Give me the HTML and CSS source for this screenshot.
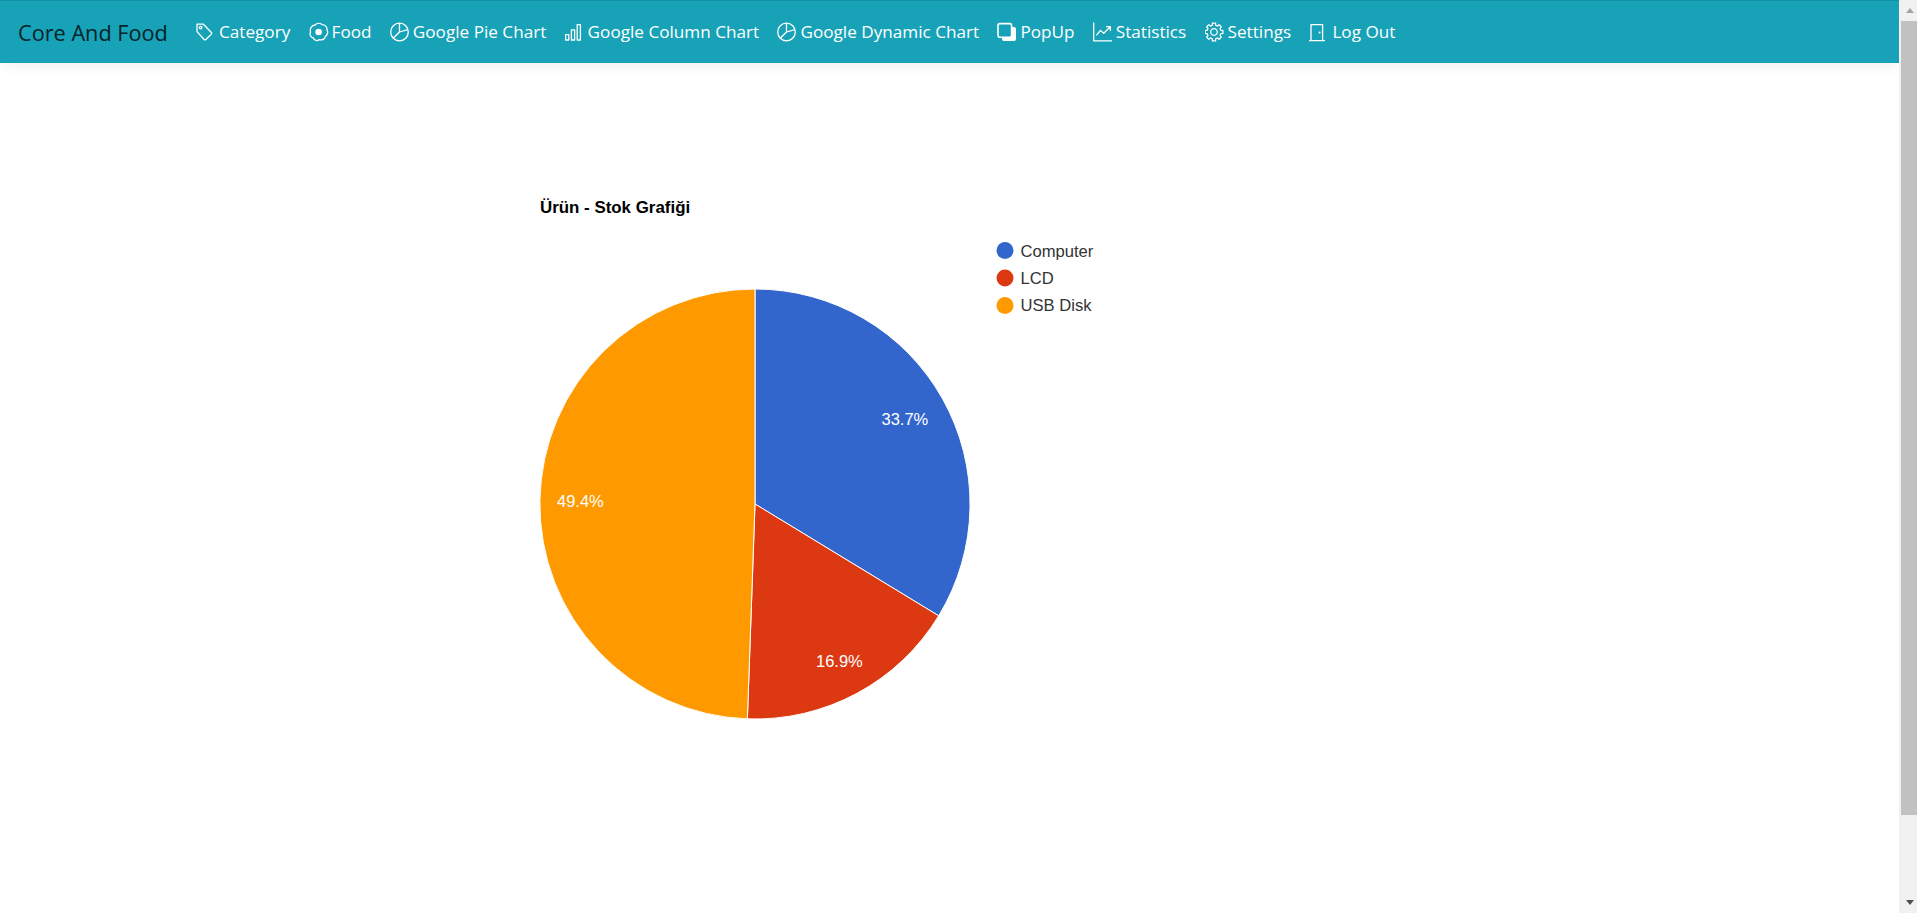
FILE: index.html
```html
<!DOCTYPE html>
<html lang="tr">
<head>
<meta charset="utf-8">
<title>Core And Food</title>
<link rel="stylesheet" href="styles.css">
</head>
<body>
<div class="page">
  <nav class="navbar">
    <a class="brand" href="#">Core And Food</a>
    <ul class="menu">
      <li class="item"><svg class="icon" viewBox="0 0 20 20"><path d="M1 2.2H7.4L15.6 10.8Q16 11.4 15.6 11.9L9.6 17.7Q9 18.2 8.4 17.7L1 9.6Z"/><circle cx="4.6" cy="5.6" r="1.3"/></svg><span class="text">Category</span></li>
      <li class="item"><svg class="icon" viewBox="0 0 20 20"><path d="M6 3C8 .8 11 1 13 2.6C16 2.4 18.4 5 18 8C19.6 10.5 18 13.5 16.4 14.4C16 17 13 18.6 10.6 17.6C8.6 19.4 5 18.4 4.4 16C1.8 15.6 .2 12.4 1.6 10C.4 7 2.8 3.2 6 3Z"/><circle class="solid" cx="9.6" cy="10" r="3.3"/></svg><span class="text">Food</span></li>
      <li class="item"><svg class="icon" viewBox="0 0 20 20"><circle cx="9.5" cy="10" r="8.8"/><path d="M9.5 1.2V10L17.8 7.6M9.5 10L3.2 16.2"/></svg><span class="text">Google Pie Chart</span></li>
      <li class="item"><svg class="icon" viewBox="0 0 20 20"><path d="M.6 12.6H3.8V18H.6ZM6.4 7.8H9.6V18H6.4ZM12.2 2.6H15.4V18H12.2Z"/></svg><span class="text">Google Column Chart</span></li>
      <li class="item"><svg class="icon" viewBox="0 0 20 20"><circle cx="9.5" cy="10" r="8.8"/><path d="M9.5 1.2V10L17.8 7.6M9.5 10L3.2 16.2"/></svg><span class="text">Google Dynamic Chart</span></li>
      <li class="item"><svg class="icon" viewBox="0 0 20 20"><rect class="solid" x="5" y="5" width="14" height="14" rx="2"/><rect class="backed" x="1" y="1.6" width="13.6" height="13.6" rx="2"/></svg><span class="text">PopUp</span></li>
      <li class="item"><svg class="icon" viewBox="0 0 20 20"><path d="M.7 .5V18.8H19M3.4 13.4L7.4 8.4L10.8 11.2L17.2 4.8M13 4.6H17.4V9"/></svg><span class="text">Statistics</span></li>
      <li class="item"><svg class="icon" viewBox="0 0 20 20"><g transform="translate(9 10)"><polygon points="-1.63,-6.81 -1.56,-8.86 1.56,-8.86 1.63,-6.81 3.66,-5.97 5.16,-7.37 7.37,-5.16 5.97,-3.66 6.81,-1.63 8.86,-1.56 8.86,1.56 6.81,1.63 5.97,3.66 7.37,5.16 5.16,7.37 3.66,5.97 1.63,6.81 1.56,8.86 -1.56,8.86 -1.63,6.81 -3.66,5.97 -5.16,7.37 -7.37,5.16 -5.97,3.66 -6.81,1.63 -8.86,1.56 -8.86,-1.56 -6.81,-1.63 -5.97,-3.66 -7.37,-5.16 -5.16,-7.37 -3.66,-5.97"/><circle r="3.3"/></g></svg><span class="text">Settings</span></li>
      <li class="item"><svg class="icon" viewBox="0 0 20 20"><path d="M0 18.6H16M2 18.6V2.6H13.6V18.6"/><circle class="solid" cx="10.6" cy="10.6" r="1"/></svg><span class="text">Log Out</span></li>
    </ul>
  </nav>
  <main class="content">
    <svg class="chart" viewBox="520 180 620 560" width="620" height="560" role="img" aria-label="Ürün - Stok Grafiği">
      <text class="chart-title" x="540" y="213">Ürün - Stok Grafiği</text>
      <circle class="blue" cx="1005" cy="250.6" r="8.5"/>
      <text class="legend" x="1020.5" y="256.5">Computer</text>
      <circle class="red" cx="1005" cy="278" r="8.5"/>
      <text class="legend" x="1020.5" y="284">LCD</text>
      <circle class="orange" cx="1005" cy="305.6" r="8.5"/>
      <text class="legend" x="1020.5" y="311">USB Disk</text>
      <path class="blue slice" d="M755 504V289A215 215 0 0 1 938.7 615.8Z"/>
      <path class="red slice" d="M755 504L938.7 615.8A215 215 0 0 1 747.4 718.87Z"/>
      <path class="orange slice" d="M755 504L747.4 718.87A215 215 0 0 1 755 289Z"/>
      <text class="label" x="881.5" y="425">33.7%</text>
      <text class="label" x="816" y="667">16.9%</text>
      <text class="label" x="557" y="507">49.4%</text>
    </svg>
  </main>
</div>
<aside class="scrollbar" aria-hidden="true">
  <div class="arrow-box"><span class="arrow-up"></span></div>
  <div class="thumb"></div>
  <div class="track"></div>
  <div class="arrow-box"><span class="arrow-down"></span></div>
</aside>
</body>
</html>
```
FILE: styles.css
```css
html, body {
  margin: 0;
  height: 913px;
  overflow: hidden;
  background: #fff;
}
body {
  display: flex;
}
.page {
  flex: 1;
  min-width: 0;
  display: flex;
  flex-direction: column;
}
.navbar {
  height: 63px;
  box-sizing: border-box;
  display: flex;
  align-items: center;
  padding-left: 18px;
  background: #17a2b8;
  border-top: 1px solid #1291a5;
  box-shadow: 0 4px 12px rgba(0, 0, 0, .05);
  font-family: "Open Sans", "Noto Sans", sans-serif;
}
.brand {
  font-size: 21.7px;
  color: #04222a;
  text-decoration: none;
  width: 178px;
  flex: none;
}
.menu {
  list-style: none;
  display: flex;
  gap: 18.3px;
  margin: 0;
  padding: 0;
}
.item {
  display: flex;
  align-items: center;
  gap: 3px;
  font-size: 17.15px;
  color: #fff;
  white-space: nowrap;
}
.text {
  padding-bottom: 2px;
}
.icon {
  width: 20px;
  height: 20px;
  flex: none;
  fill: none;
  stroke: #fff;
  stroke-width: 1.3;
  stroke-linejoin: round;
}
.icon .solid {
  fill: #fff;
  stroke: none;
}
.icon .backed {
  fill: #17a2b8;
  stroke-width: 1.6;
}
.content {
  flex: 1;
  padding: 117px 0 0 520px;
}
.chart {
  display: block;
}
.chart text {
  font-family: "Liberation Sans", Arial, sans-serif;
}
.chart-title {
  font-size: 16.9px;
  font-weight: 700;
  fill: #000;
}
.legend {
  font-size: 16.6px;
  fill: #333;
}
.label {
  font-size: 16.5px;
  fill: #fff;
}
.blue { fill: #3366cc; }
.red { fill: #dc3912; }
.orange { fill: #ff9900; }
.slice {
  stroke: #fff;
  stroke-width: 1;
}
.scrollbar {
  width: 18px;
  flex: none;
  height: 913px;
  display: flex;
  flex-direction: column;
  background: #f1f1f1;
}
.arrow-box {
  height: 21px;
  flex: none;
  display: flex;
  align-items: center;
  justify-content: center;
  padding-left: 3px;
}
.arrow-up, .arrow-down {
  width: 0;
  height: 0;
  border-left: 4.5px solid transparent;
  border-right: 4.5px solid transparent;
}
.arrow-up { border-bottom: 5px solid #a3a3a3; }
.arrow-down { border-top: 5px solid #505050; }
.thumb {
  height: 794px;
  flex: none;
  margin-left: 2px;
  background: #c1c1c1;
}
.track {
  flex: 1;
}
```
